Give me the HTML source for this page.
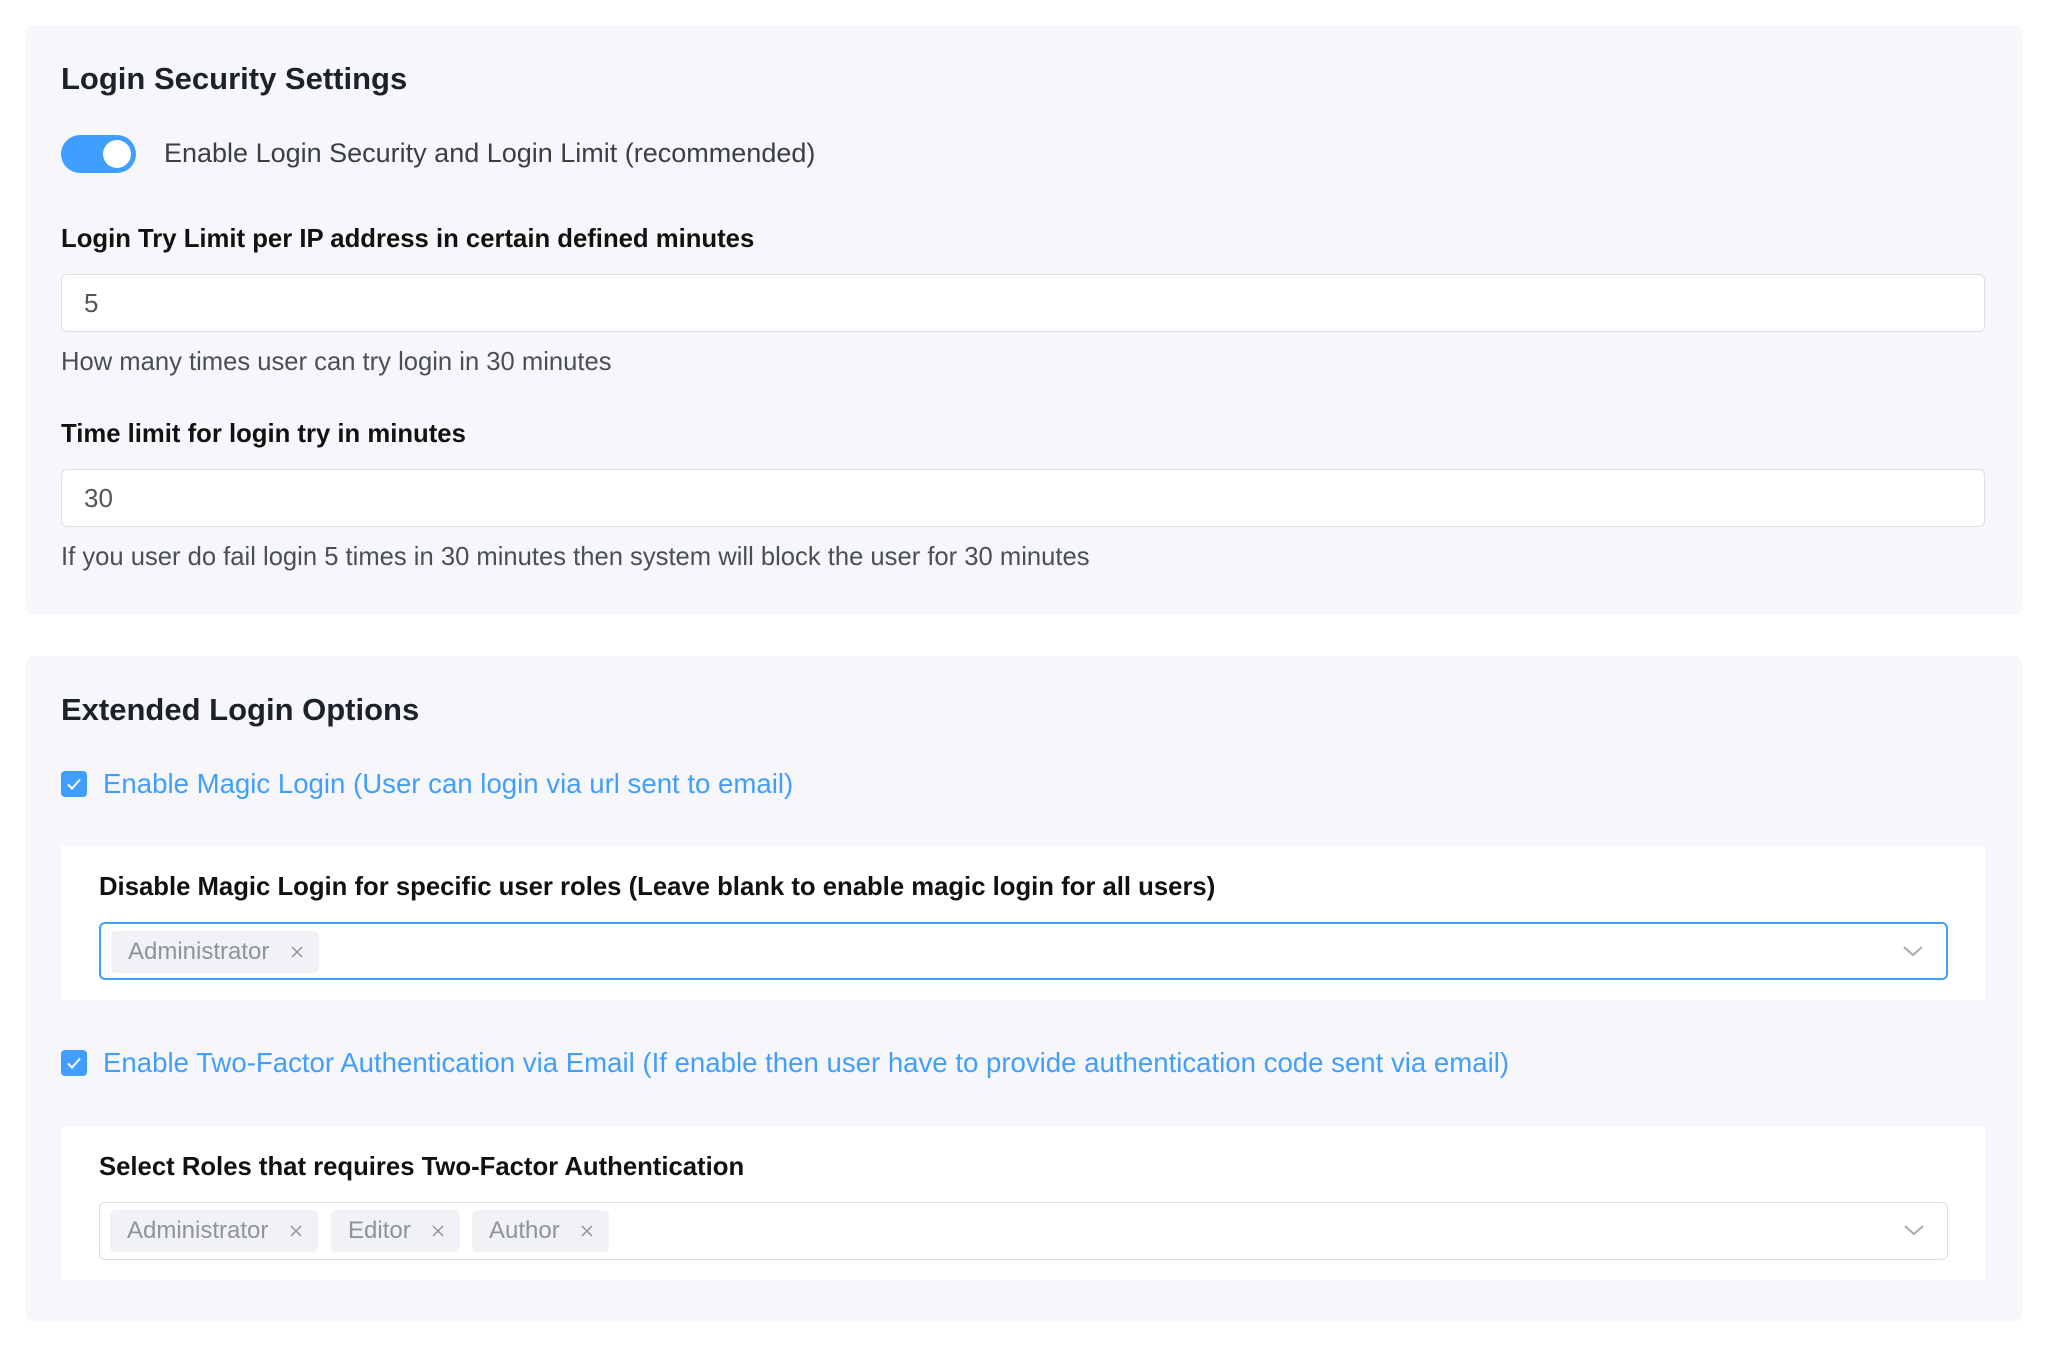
<!DOCTYPE html>
<html><head><style>
*{box-sizing:border-box;margin:0;padding:0}
body{width:2048px;height:1345px;background:#fff;font-family:"Liberation Sans",sans-serif;position:relative;overflow:hidden;color:#1f2329}
.card{position:absolute;left:25px;width:1998px;background:#f7f7fb;border-radius:10px}
.abs{position:absolute;white-space:nowrap}
h2{position:absolute;font-size:31px;font-weight:bold;color:#1d2129;white-space:nowrap}
.lbl{font-size:25.7px;font-weight:bold;color:#111}
.help{font-size:25.6px;color:#4a4f57}
.inp{position:absolute;left:36px;width:1924px;height:58px;background:#fff;border:1.5px solid #dcdfe6;border-radius:6px;font-size:26px;color:#555;padding-left:22px;line-height:56px}
.box{position:absolute;left:36px;width:1924px;background:#fff}
.sel{position:absolute;left:38px;width:1849px;height:58px;background:#fff;border:1.5px solid #dcdfe6;border-radius:6px}
.tag{position:absolute;top:7px;height:42px;background:#f0f2f5;border-radius:5px;font-size:24px;color:#909399;line-height:42px;padding-left:17px}
.tag svg{position:absolute;top:14px;right:15px}
.chev{position:absolute;right:22px;top:20px}
.cb{position:absolute;left:36px;width:26px;height:26px;background:#409eff;border-radius:4px}
.blue{font-size:27.6px;color:#409eff}
</style></head><body>
<div class="card" style="top:25px;height:590px">
<h2 style="left:36px;top:36px">Login Security Settings</h2>
<div class="abs" style="left:36px;top:110px;width:75px;height:38px;border-radius:19px;background:#409eff"><div style="position:absolute;right:5px;top:5px;width:28px;height:28px;border-radius:50%;background:#fff"></div></div>
<div class="abs" style="left:139px;top:113px;font-size:27px;color:#3a3f47">Enable Login Security and Login Limit (recommended)</div>
<div class="abs lbl" style="left:36px;top:200px">Login Try Limit per IP address in certain defined minutes</div>
<div class="inp" style="top:249px">5</div>
<div class="abs help" style="left:36px;top:323px">How many times user can try login in 30 minutes</div>
<div class="abs lbl" style="left:36px;top:395px">Time limit for login try in minutes</div>
<div class="inp" style="top:444px">30</div>
<div class="abs help" style="left:36px;top:518px">If you user do fail login 5 times in 30 minutes then system will block the user for 30 minutes</div>
</div>
<div class="card" style="top:656px;height:666px">
<h2 style="left:36px;top:36px">Extended Login Options</h2>
<div class="cb" style="top:115px"><svg width="26" height="26" viewBox="0 0 26 26"><path d="M7 13.5l4 4 8-9" fill="none" stroke="#fff" stroke-width="2"/></svg></div>
<div class="abs blue" style="left:78px;top:112px">Enable Magic Login (User can login via url sent to email)</div>
<div class="box" style="top:190px;height:154px">
<div class="abs lbl" style="left:38px;top:27px">Disable Magic Login for specific user roles (Leave blank to enable magic login for all users)</div>
<div class="sel" style="top:76px;border:2px solid #409eff">
<div class="tag" style="left:10px;width:208px">Administrator<svg width="14" height="14" viewBox="0 0 14 14"><path d="M2 2l10 10M12 2L2 12" stroke="#909399" stroke-width="1.5"/></svg></div>
<svg class="chev" width="22" height="14" viewBox="0 0 22 14"><path d="M2 3l9 8 9-8" fill="none" stroke="#a8abb2" stroke-width="2"/></svg>
</div></div>
<div class="cb" style="top:394px"><svg width="26" height="26" viewBox="0 0 26 26"><path d="M7 13.5l4 4 8-9" fill="none" stroke="#fff" stroke-width="2"/></svg></div>
<div class="abs blue" style="left:78px;top:391px">Enable Two-Factor Authentication via Email (If enable then user have to provide authentication code sent via email)</div>
<div class="box" style="top:471px;height:153px">
<div class="abs lbl" style="left:38px;top:26px">Select Roles that requires Two-Factor Authentication</div>
<div class="sel" style="top:75px">
<div class="tag" style="left:10px;width:208px">Administrator<svg width="14" height="14" viewBox="0 0 14 14"><path d="M2 2l10 10M12 2L2 12" stroke="#909399" stroke-width="1.5"/></svg></div>
<div class="tag" style="left:231px;width:129px">Editor<svg width="14" height="14" viewBox="0 0 14 14"><path d="M2 2l10 10M12 2L2 12" stroke="#909399" stroke-width="1.5"/></svg></div>
<div class="tag" style="left:372px;width:137px">Author<svg width="14" height="14" viewBox="0 0 14 14"><path d="M2 2l10 10M12 2L2 12" stroke="#909399" stroke-width="1.5"/></svg></div>
<svg class="chev" width="22" height="14" viewBox="0 0 22 14"><path d="M2 3l9 8 9-8" fill="none" stroke="#a8abb2" stroke-width="2"/></svg>
</div></div>
</div>
</body></html>
